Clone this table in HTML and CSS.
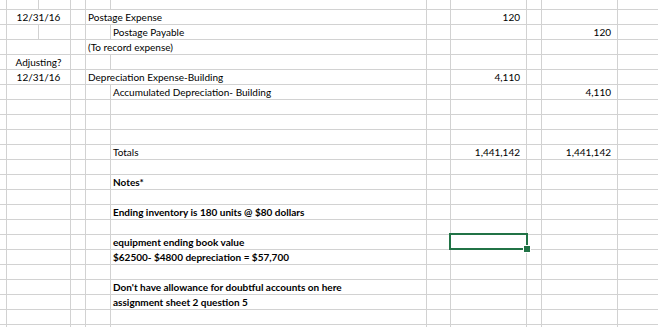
FILE: index.html
```html
<!DOCTYPE html>
<html>
<head>
<meta charset="utf-8">
<link rel="stylesheet" href="styles.css">
</head>
<body>
<div class="sheet">
  <div class="row top"><div></div><div></div><div></div><div></div><div></div><div></div><div></div><div></div><div></div><div></div><div class="j"></div></div>

  <div class="row"><div></div><div class="ab ctr">12/31/16</div><div></div><div class="de">Postage Expense</div><div></div><div class="num">120</div><div></div><div></div><div class="j"></div></div>

  <div class="row"><div></div><div></div><div></div><div></div><div></div><div class="txt">Postage Payable</div><div></div><div></div><div></div><div class="num">120</div><div class="j"></div></div>

  <div class="row"><div></div><div class="ab"></div><div></div><div class="de">(To record expense)</div><div></div><div></div><div></div><div></div><div class="j"></div></div>

  <div class="row"><div></div><div class="ab ctr">Adjusting?</div><div></div><div></div><div></div><div></div><div></div><div></div><div></div><div class="j"></div></div>

  <div class="row"><div></div><div class="ab ctr">12/31/16</div><div></div><div class="de">Depreciation Expense-Building</div><div></div><div class="num">4,110</div><div></div><div></div><div class="j"></div></div>

  <div class="row"><div></div><div class="ab"></div><div></div><div></div><div class="txt">Accumulated Depreciation- Building</div><div></div><div></div><div></div><div class="num">4,110</div><div class="j"></div></div>

  <div class="row"><div></div><div class="ab"></div><div></div><div></div><div></div><div></div><div></div><div></div><div></div><div class="j"></div></div>
  <div class="row"><div></div><div class="ab"></div><div></div><div></div><div></div><div></div><div></div><div></div><div></div><div class="j"></div></div>
  <div class="row"><div></div><div class="ab"></div><div></div><div></div><div></div><div></div><div></div><div></div><div></div><div class="j"></div></div>

  <div class="row"><div></div><div class="ab"></div><div></div><div></div><div class="txt">Totals</div><div></div><div class="num">1,441,142</div><div></div><div class="num">1,441,142</div><div class="j"></div></div>

  <div class="row"><div></div><div class="ab"></div><div></div><div></div><div></div><div></div><div></div><div></div><div></div><div class="j"></div></div>

  <div class="row"><div></div><div class="ab"></div><div></div><div></div><div class="txt b">Notes*</div><div></div><div></div><div></div><div></div><div class="j"></div></div>

  <div class="row"><div></div><div class="ab"></div><div></div><div></div><div></div><div></div><div></div><div></div><div></div><div class="j"></div></div>

  <div class="row"><div></div><div class="ab"></div><div></div><div></div><div class="txt b">Ending inventory is 180 units @ $80 dollars</div><div></div><div></div><div></div><div></div><div class="j"></div></div>

  <div class="row"><div></div><div class="ab"></div><div></div><div></div><div></div><div></div><div></div><div></div><div></div><div class="j"></div></div>

  <div class="row"><div></div><div class="ab"></div><div></div><div></div><div class="txt b">equipment ending book value</div><div></div><div class="sel"><span class="handle"></span></div><div></div><div></div><div class="j"></div></div>

  <div class="row"><div></div><div class="ab"></div><div></div><div></div><div class="txt b">$62500- $4800 depreciation = $57,700</div><div></div><div></div><div></div><div></div><div class="j"></div></div>

  <div class="row"><div></div><div class="ab"></div><div></div><div></div><div></div><div></div><div></div><div></div><div></div><div class="j"></div></div>

  <div class="row"><div></div><div class="ab"></div><div></div><div></div><div class="txt b">Don't have allowance for doubtful accounts on here</div><div></div><div></div><div></div><div></div><div class="j"></div></div>

  <div class="row"><div></div><div class="ab"></div><div></div><div></div><div class="txt b">assignment sheet 2 question 5</div><div></div><div></div><div></div><div></div><div class="j"></div></div>

  <div class="row"><div></div><div class="ab"></div><div></div><div></div><div></div><div></div><div></div><div></div><div></div><div class="j"></div></div>
  <div class="row"><div></div><div class="ab"></div><div></div><div></div><div></div><div></div><div></div><div></div><div></div><div class="j"></div></div>
</div>
</body>
</html>
```

FILE: styles.css
```css
html, body {
  margin: 0;
  padding: 0;
  background: #ffffff;
  overflow: hidden;
}

.sheet {
  width: 658px;
  height: 327px;
  overflow: hidden;
  font-family: Lato, "Liberation Sans", sans-serif;
  font-size: 10px;
  color: #000000;
}

.row {
  display: grid;
  grid-template-columns: 7px 32px 32px 15px 25px 316px 24px 76px 15px 76px 1fr;
  height: 15px;
}

.row.top {
  height: 10px;
}

.row > div {
  box-sizing: border-box;
  border-right: 1px solid #d2d2d2;
  border-bottom: 1px solid #d2d2d2;
  line-height: 14px;
  white-space: nowrap;
  min-width: 0;
}

.row > div.j {
  border-right: none;
}

.ab {
  grid-column: span 2;
}

.de {
  grid-column: span 2;
  padding-left: 2px;
}

.ctr {
  text-align: center;
}

.txt {
  padding-left: 2px;
}

.b {
  font-weight: bold;
}

.num {
  text-align: right;
  padding-right: 6px;
}

.sel {
  position: relative;
}

.sel::after {
  content: "";
  position: absolute;
  left: -2px;
  right: -2px;
  top: -2px;
  bottom: -1px;
  border: 2px solid #217346;
}

.handle {
  position: absolute;
  left: 72px;
  top: 10px;
  width: 6px;
  height: 6px;
  background: #217346;
  border: 1px solid #ffffff;
  z-index: 2;
}
```
